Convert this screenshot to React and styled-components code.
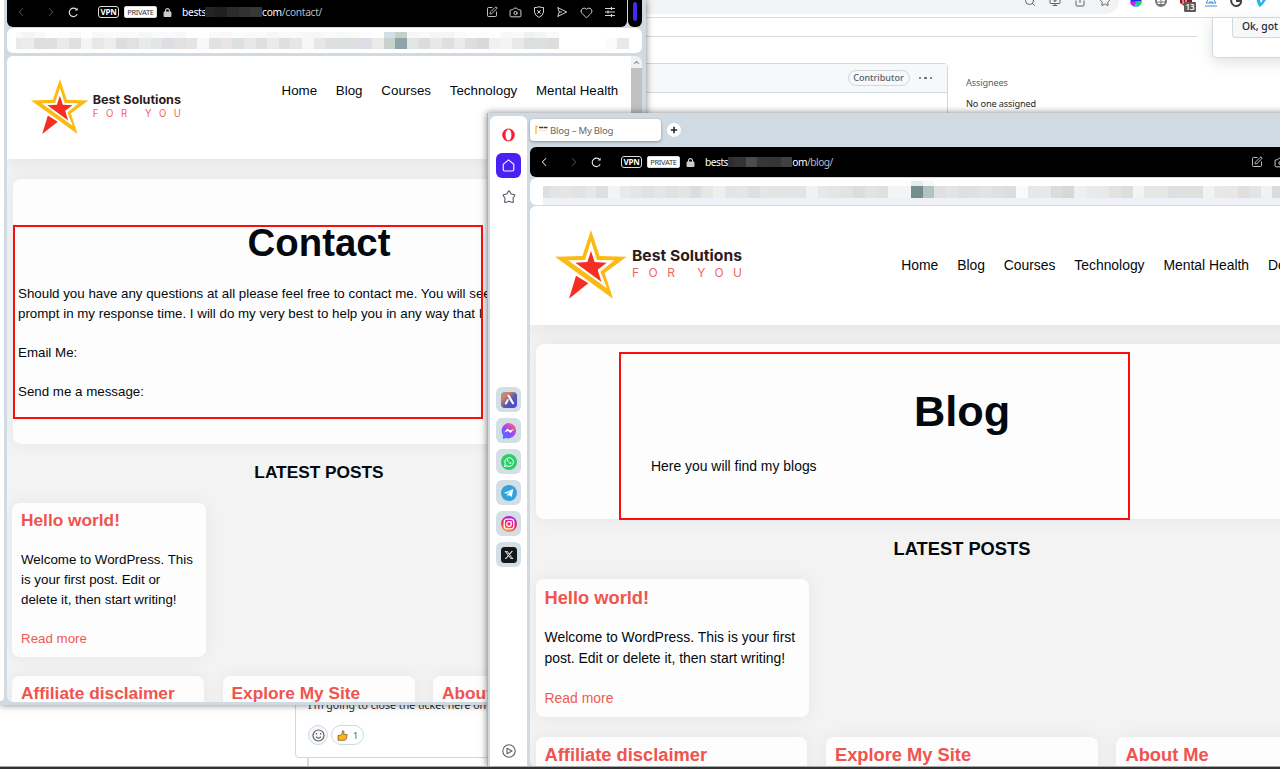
import React from "react";
import styled, { createGlobalStyle, css } from "styled-components";
import {
  Camera,
  ChevronLeft,
  ChevronRight,
  ChevronUp,
  Heart,
  MonitorDown,
  Search,
  Share,
  SquarePen,
  Star,
} from "lucide-react";
import { FaLock, FaXTwitter } from "react-icons/fa6";

const uiFont = `"Noto Sans", "Open Sans", sans-serif`;
const pageFont = `"Liberation Sans", Arial, sans-serif`;
const frame = "#cfdae3";

const GlobalStyle = createGlobalStyle`
  * { box-sizing: border-box; }
  body { margin: 0; overflow: hidden; }
  h1, h2, h3, p { margin: 0; }
`;

const Desktop = styled.div`
  position: relative;
  width: 1280px;
  height: 769px;
  overflow: hidden;
  background: #fff;
  font-family: ${uiFont};
`;

const Taskbar = styled.div`
  position: absolute;
  left: 0;
  right: 0;
  bottom: 0;
  height: 3px;
  background: #35312f;
  border-top: 1px solid #aaa;
`;

const RedFrame = styled.div`
  position: absolute;
  left: ${({ $x }) => $x}px;
  top: ${({ $y }) => $y}px;
  width: ${({ $w }) => $w}px;
  height: ${({ $h }) => $h}px;
  border: 2px solid #fc0d0d;
`;

/* issue tracker window */

const Tracker = styled.div`
  height: 769px;
  color: #57606a;
`;

const Toolbar = styled.div`
  display: flex;
  height: 18px;
  overflow: hidden;
  border-bottom: 1px solid #dadde0;
  color: #5f6368;
`;

const Omnibox = styled.div`
  display: flex;
  justify-content: flex-end;
  gap: 13px;
  width: 1119px;
  height: 14px;
  padding-right: 8px;
  background: #f1f3f4;
  border-radius: 0 0 14px 0;

  svg {
    margin-top: -5px;
  }
`;

const Extensions = styled.div`
  display: flex;
  gap: 13px;
  margin: -5px 0 0 11px;
`;

const ExtensionSlot = styled.div`
  position: relative;
  flex: none;
  width: 12px;
  height: 12px;

  svg {
    display: block;
  }
`;

const Badge = styled.span`
  position: absolute;
  left: 4px;
  top: 7px;
  width: 12px;
  height: 10px;
  border-radius: 1px;
  background: #5d5d5d;
  color: #fff;
  font-size: 8px;
  font-weight: 600;
  line-height: 10px;
  text-align: center;
`;

const TabRule = styled.div`
  width: 1197px;
  height: 19px;
  border-bottom: 1px solid #d5dbe1;
`;

const TrackerBody = styled.div`
  display: flex;
  align-items: flex-start;
  gap: 18px;
  padding: 26px 0 0 295px;
`;

const Thread = styled.div`
  flex: none;
  width: 653px;

  &::after {
    content: "";
    display: block;
    height: 20px;
    margin-left: 12px;
    border-left: 2px solid #d8dee4;
  }
`;

const Comment = styled.div`
  display: flex;
  flex-direction: column;
  height: 695px;
  border: 1px solid #d0d7de;
  border-radius: 4px;
`;

const CommentHeader = styled.div`
  display: flex;
  align-items: center;
  justify-content: flex-end;
  gap: 9px;
  height: 29px;
  padding-right: 15px;
  border-bottom: 1px solid #d0d7de;
  background: #f6f8fa;
`;

const Role = styled.span`
  height: 16px;
  width: 62px;
  border: 1px solid #d0d7de;
  border-radius: 9px;
  font-size: 9px;
  font-weight: 500;
  line-height: 14px;
  text-align: center;
`;

const Dots = styled.span`
  display: flex;
  gap: 3px;
  i {
    width: 2.5px;
    height: 2.5px;
    border-radius: 50%;
    background: #57606a;
  }
`;

const CommentText = styled.p`
  margin: auto 0 12px 12px;
  color: #24292f;
  font-size: 10.6px;
  line-height: 16px;
`;

const Reactions = styled.div`
  display: flex;
  gap: 3px;
  margin: 0 0 12px 12px;
`;

const Reaction = styled.span`
  display: flex;
  align-items: center;
  justify-content: center;
  gap: 5px;
  width: ${({ $wide }) => ($wide ? 33 : 20)}px;
  height: 20px;
  border: 1px solid #d0d7de;
  border-radius: 10px;
  background: ${({ $wide }) => ($wide ? "#fff" : "#f6f8fa")};
  font-size: 9px;
`;

const Assignees = styled.div`
  padding-top: 13px;
  font-size: 9.2px;
  letter-spacing: -0.15px;
  line-height: 14px;
  p + p {
    margin-top: 6.5px;
    color: #24292f;
  }
`;

const Popover = styled.div`
  position: absolute;
  left: 1212px;
  top: 18px;
  width: 100px;
  height: 40px;
  padding-left: 19px;
  border: solid #d0d7de;
  border-width: 0 0 1px 1px;
  border-radius: 0 0 0 5px;
  background: #fff;
  box-shadow: 0 4px 14px rgba(120, 130, 140, 0.25);
`;

const PopoverButton = styled.div`
  height: 20px;
  padding-left: 9px;
  border: solid #d0d7de;
  border-width: 0 0 1px 1px;
  border-radius: 0 0 0 4px;
  background: #f6f8fa;
  color: #24292f;
  font-size: 10.3px;
  font-weight: 500;
  line-height: 16px;
  white-space: nowrap;
`;

/* browser windows */

const Window = styled.div`
  position: absolute;
  display: flex;
  left: ${({ $x }) => $x}px;
  top: ${({ $y }) => $y}px;
  width: ${({ $w }) => $w}px;
  height: ${({ $h }) => $h}px;
  overflow: hidden;
  border-left: ${({ $edge }) => ($edge ? "1px solid #a9b0b6" : "none")};
  background: ${frame};
  box-shadow: 0 0 7px rgba(0, 0, 0, 0.5);
`;

const EdgeStrip = styled.div`
  flex: none;
  width: 4px;
  height: 701px;
  margin-right: 3px;
  background: #fff;
  border-radius: 0 0 5px 0;
`;

const Column = styled.div`
  display: flex;
  flex: none;
  flex-direction: column;
  width: ${({ $w }) => $w}px;
  height: ${({ $h }) => $h}px;
`;

const Row = styled.div`
  display: flex;
  flex: ${({ $fill }) => ($fill ? 1 : "none")};
  min-height: 0;
`;

const AddressBar = styled.div`
  display: flex;
  flex: none;
  align-items: center;
  width: ${({ $w }) => $w}px;
  height: ${({ $flat }) => ($flat ? 27 : 30)}px;
  padding: ${({ $flat }) => ($flat ? "0 0 3px 7px" : "0 0 0 7px")};
  border-radius: ${({ $flat }) => ($flat ? "0 0 6px 6px" : "6px 0 0 6px")};
  background: #000;
  color: #ddd;

  svg {
    flex: none;
  }
`;

const NavIcons = styled.div`
  display: flex;
  align-items: center;
  justify-content: space-between;
  width: 65px;
  margin-right: 19px;

  svg:nth-child(1) {
    color: ${({ $dim }) => ($dim ? "#4a4a4a" : "#ddd")};
  }
  svg:nth-child(2) {
    margin-left: 6px;
    color: #4a4a4a;
  }
`;

const Tag = styled.span`
  flex: none;
  width: ${({ $w }) => $w}px;
  height: 12px;
  margin-right: 5px;
  border: 1px solid #ddd;
  border-radius: ${({ $solid }) => ($solid ? 2 : 3)}px;
  background: ${({ $solid }) => ($solid ? "#fff" : "#000")};
  color: ${({ $solid }) => ($solid ? "#333" : "#fff")};
  font-size: ${({ $solid }) => ($solid ? 7.5 : 8)}px;
  font-weight: ${({ $solid }) => ($solid ? 400 : 700)};
  letter-spacing: -0.3px;
  line-height: 10px;
  text-align: center;
`;

const LockSlot = styled.span`
  display: flex;
  width: 20px;
  padding-left: 1px;
  color: #ccc;
`;

const Url = styled.div`
  display: flex;
  align-items: center;
  color: #fff;
  font-size: 10.2px;
  letter-spacing: ${({ $spacing }) => $spacing}px;
  line-height: 14px;
  span:first-child {
    width: 23px;
    overflow: hidden;
  }
  span:last-child {
    color: #b3bdc8;
  }
`;

const Actions = styled.div`
  display: flex;
  align-items: center;
  gap: 11.3px;
  margin: 0 ${({ $right }) => $right}px 0 auto;
  color: #d5d5d5;
`;

const SidePill = styled.div`
  width: 14px;
  height: 27px;
  margin-left: 1px;
  padding: 2px 5px;
  border-radius: 0 0 6px 6px;
  background: #000;
  &::before {
    content: "";
    display: block;
    height: 19px;
    border-radius: 2px;
    background: #4b25f5;
  }
`;

const Bookmarks = styled.div`
  flex: none;
  height: ${({ $h }) => $h}px;
  margin: 1px 0 ${({ $below }) => $below}px;
  padding: ${({ $pad }) => $pad};
  overflow: hidden;
  background: #fff;
  border-radius: 6px;
`;

const MosaicRow = styled.div`
  display: flex;
  height: ${({ $h }) => $h}px;
  background: ${({ $bg }) => $bg || "none"};
`;

const Cell = styled.i`
  flex: none;
  width: ${({ $w }) => $w || 11.66}px;
  background: ${({ $c }) => $c};
`;

/* site page inside a browser */

const Page = styled.div`
  flex: 1;
  min-height: 0;
  overflow: hidden;
  border-radius: 6px 0 0 6px;
  background: #f3f3f3;
  color: #03090e;
  font-family: ${pageFont};
  font-size: ${({ $size }) => $size}px;
  line-height: 1.5;
`;

const SiteHeader = styled.header`
  display: flex;
  align-items: ${({ $top }) => ($top ? "flex-start" : "center")};
  height: ${({ $h }) => $h}px;
  padding: ${({ $pad }) => $pad};
  background: #fff;
  box-shadow: 0 0 22px rgba(0, 0, 0, 0.09);
`;

const SiteNav = styled.nav`
  display: flex;
  gap: 18.8px;
  margin-left: ${({ $left }) => $left}px;
  padding-top: ${({ $drop }) => $drop || 0}px;
  font-size: ${({ $size }) => $size}px;
  white-space: nowrap;
`;

const panel = css`
  background: #fdfdfd;
  border-radius: 8px;
  box-shadow: 0 0 18px rgba(0, 0, 0, 0.06);
`;

const Hero = styled.section`
  ${panel}
  height: ${({ $h }) => $h}px;
  margin: ${({ $above }) => $above}px 5.5px 0;
  padding: ${({ $pad }) => $pad};
  white-space: nowrap;
`;

const HeroTitle = styled.h1`
  font-size: ${({ $size }) => $size}px;
  line-height: 1.2;
  text-align: center;
`;

const HeroText = styled.p`
  margin-top: ${({ $gap }) => $gap}px;
`;

const SectionTitle = styled.h2`
  margin: ${({ $m }) => $m};
  font-size: ${({ $size }) => $size}px;
  line-height: 24px;
  text-align: center;
`;

const Cards = styled.div`
  display: flex;
  gap: ${({ $between }) => $between}px;
  margin: 0 5px ${({ $gap }) => $gap}px ${({ $left }) => $left}px;
`;

const Card = styled.article`
  ${panel}
  flex: none;
  width: ${({ $w }) => $w}px;
  height: ${({ $h }) => $h}px;
  padding: ${({ $top }) => $top}px 9px;
  white-space: nowrap;

  h3 {
    color: #f0544e;
    font-size: ${({ $title }) => $title}px;
    line-height: 26px;
  }
  p {
    margin: ${({ $textGap }) => $textGap};
  }
  a {
    color: #f05a54;
  }
`;

const Scrollbar = styled.div`
  width: 11px;
  background: #c1c1c1;
  border-radius: 0 6px 0 0;
  overflow: hidden;
`;

const ScrollButton = styled.div`
  display: flex;
  justify-content: center;
  align-items: center;
  height: 12px;
  background: #f1f1f1;
  color: #999;
`;

/* side panel and tabs */

const Sidebar = styled.aside`
  display: flex;
  flex: none;
  flex-direction: column;
  align-items: center;
  width: 37px;
  height: 651px;
  margin: 3px 3px 0 2px;
  padding: 12px 0 9px;
  background: #fff;
  border-radius: 6px 6px 0 0;
`;

const SideButton = styled.div`
  display: flex;
  flex: none;
  align-items: center;
  justify-content: center;
  width: 25px;
  height: 25px;
  border-radius: 6px;
  background: #d3dee5;
`;

const HomeButton = styled(SideButton)`
  margin: 11px 0 12px;
  background: #4b20f5;
`;

const SideApps = styled.div`
  display: flex;
  flex-direction: column;
  gap: 6px;
  margin: 183px 0 auto;
`;

const TabStrip = styled.div`
  display: flex;
  flex: none;
  align-items: center;
  gap: 6px;
  height: 34px;
`;

const Tab = styled.div`
  display: flex;
  align-items: center;
  gap: 2px;
  width: 131px;
  height: 22px;
  padding-left: 5px;
  border-radius: 4px;
  background: #fff;
  box-shadow: 0 1px 3px rgba(0, 0, 0, 0.35);
  color: #666;
  font-size: 9.6px;
  letter-spacing: -0.25px;
`;

const NewTab = styled.div`
  display: flex;
  align-items: center;
  justify-content: center;
  width: 14px;
  height: 14px;
  border-radius: 50%;
  background: #fff;
`;

const LogoSvg = styled.svg`
  flex: none;
  overflow: visible;
  font-family: Inter, sans-serif;
`;

function Logo({ width }) {
  return (
    <LogoSvg width={width} height={(width * 69) / 187} viewBox="0 0 187 69">
      <g transform="scale(.3333)">
        <path
          fill="#fcbb14"
          fillRule="evenodd"
          d="M108 0 134 78 215 80 149 129 174 206 0 80 82 78zM108 34 90 90 39 91 156 175 136 125 178 91 126 90z"
        />
        <path fill="#f42e23" d="M108 63 119 96 155 98 128 119 139 155 61 98 97 96z" />
        <path fill="#f42e23" d="M63 137 100 160 42 206z" />
      </g>
      <text x="77" y="31" textLength="110" lengthAdjust="spacingAndGlyphs" fontSize="15" fontWeight="700" fill="#2d1b20">
        Best Solutions
      </text>
      <text x="77" y="47" textLength="110" fontSize="12" fontWeight="400" fill="#f0655f">
        FOR YOU
      </text>
    </LogoSvg>
  );
}

function Reload() {
  return (
    <svg width="11" height="11" viewBox="0 0 11 11" fill="none" stroke="#ddd" strokeWidth="1.2">
      <path d="M9.2 7.3A4.2 4.2 0 1 1 8.9 3" />
      <path d="M6.8 3.6H9.6V.8z" fill="#ddd" stroke="none" />
    </svg>
  );
}

function ShieldX() {
  return (
    <svg width="12" height="12" viewBox="0 0 12 12" fill="none" stroke="currentColor">
      <path d="M1.5 1.5Q4 1.8 6 .7 8 1.8 10.5 1.5V6Q10.2 9.5 6 11.4 1.8 9.5 1.5 6zM4.3 4.3l3.4 3.4M7.7 4.3 4.3 7.7" />
    </svg>
  );
}

function Flow() {
  return (
    <svg width="12" height="12" viewBox="0 0 12 12" fill="none" stroke="currentColor" strokeLinejoin="round">
      <path d="M1.7 1.5 10.7 6 1.7 10.5 3.3 6zM3.3 6H6" />
    </svg>
  );
}

function Sliders() {
  return (
    <svg width="12" height="12" viewBox="0 0 12 12" fill="none" stroke="currentColor" strokeWidth="1.2">
      <path d="M1 2.5H11M1 6H11M1 9.5H11M7.5 1V4M4 4.5V7.5M7.5 8V11" />
    </svg>
  );
}

function Mosaic({ colors, height, first }) {
  return (
    <MosaicRow $h={height}>
      {colors.split(" ").map((c, i) => (
        <Cell key={i} $c={`#${c}`} $w={i === 0 ? first : undefined} />
      ))}
    </MosaicRow>
  );
}

function Address({ domainEnd, path, width, flat, blocks }) {
  return (
    <AddressBar $w={width} $flat={flat}>
      <NavIcons $dim={flat}>
        <ChevronLeft size={14} strokeWidth={1.8} />
        <ChevronRight size={14} strokeWidth={1.8} />
        <Reload />
      </NavIcons>
      <Tag $w={21}>VPN</Tag>
      <Tag $w={33} $solid>
        PRIVATE
      </Tag>
      <LockSlot>
        <FaLock size={9} />
      </LockSlot>
      <Url $spacing={flat ? -0.28 : -0.5}>
        <span>bests</span>
        <Mosaic colors={blocks} height={10} first={flat ? 10.4 : 6} />
        <span>{domainEnd}</span>
        <span>{path}</span>
      </Url>
      <Actions $right={flat ? 11 : 8}>
        <SquarePen size={12} strokeWidth={1.8} />
        <Camera size={13} strokeWidth={1.8} />
        {flat && (
          <>
            <ShieldX />
            <Flow />
            <Heart size={13} strokeWidth={1.8} />
            <Sliders />
          </>
        )}
      </Actions>
    </AddressBar>
  );
}

function TrackerWindow() {
  return (
    <Tracker>
      <Toolbar>
        <Omnibox>
          <Search size={12} />
          <MonitorDown size={12} />
          <Share size={12} />
          <Star size={12} />
        </Omnibox>
        <Extensions>
          <ExtensionSlot>
            <svg width="12" height="12">
              <circle cx="6" cy="6" r="5.5" fill="#2632e5" />
              <path d="M6 6 0 7A6 6 0 0 0 4 11.5z" fill="#c724e8" />
              <path d="M6 6 4 11.5A6 6 0 0 0 9 11z" fill="#20c8e8" />
              <path d="M6 6 9 11A6 6 0 0 0 12 6z" fill="#20d950" />
            </svg>
          </ExtensionSlot>
          <ExtensionSlot>
            <svg width="13" height="12" stroke="#777" fill="none">
              <circle cx="6" cy="6" r="5" strokeWidth="2" />
              <path d="M1 7H12M3 9.5H10M6 3V11" />
            </svg>
          </ExtensionSlot>
          <ExtensionSlot>
            <svg width="12" height="12">
              <path d="M0 0H12V8L6 12 0 8z" fill="#a30d18" />
              <path d="M3 5v4M6 5v4" stroke="#fff" />
            </svg>
            <Badge>13</Badge>
          </ExtensionSlot>
          <ExtensionSlot>
            <svg width="12" height="12" fill="none" stroke="#3a91d8">
              <path d="M6 0 1 8H11zM0 11H12M4 7H8" />
            </svg>
          </ExtensionSlot>
          <ExtensionSlot>
            <svg width="12" height="12" fill="none" stroke="#444" strokeWidth="2">
              <path d="M10.8 4A5 5 0 1 1 6 1M6 6H11" />
            </svg>
          </ExtensionSlot>
          <ExtensionSlot>
            <svg width="12" height="12">
              <path d="M1 3H4L6 8 9 3H12Q9 9 5 12 3 11 1 3z" fill="#1ab7ea" />
            </svg>
          </ExtensionSlot>
        </Extensions>
      </Toolbar>
      <TabRule />
      <TrackerBody>
        <Thread>
          <Comment>
            <CommentHeader>
              <Role>Contributor</Role>
              <Dots>
                <i />
                <i />
                <i />
              </Dots>
            </CommentHeader>
            <CommentText>I'm going to close the ticket here on G</CommentText>
            <Reactions>
              <Reaction>
                <svg width="13" height="13" fill="none" stroke="#57606a" strokeWidth="1.2">
                  <circle cx="6.5" cy="6.5" r="5.5" />
                  <path d="M4 7.7Q6.5 10.5 9 7.7M4.4 4v1.6M8.6 4v1.6" />
                </svg>
              </Reaction>
              <Reaction $wide>
                <svg width="11" height="11" viewBox="0 0 11 11">
                  <path
                    d="M1 5.5H3.2L5.2 3 5.6.8Q7.3.5 7 2.8L6.7 4.5H10Q10.7 5.3 9.9 6.2 10.3 7 9.6 7.7 9.8 8.5 9 9 8.8 10.3 7.5 10.3H1z"
                    fill="#fbb41b"
                    stroke="#6f5117"
                    strokeWidth=".7"
                  />
                </svg>
                1
              </Reaction>
            </Reactions>
          </Comment>
        </Thread>
        <Assignees>
          <p>Assignees</p>
          <p>No one assigned</p>
        </Assignees>
      </TrackerBody>
      <Popover>
        <PopoverButton>Ok, got it!</PopoverButton>
      </Popover>
    </Tracker>
  );
}

function ContactWindow() {
  const card = { $w: 192, $h: 154, $title: 17.3, $top: 4, $textGap: "17px 0 19px" };
  return (
    <Window $x={0} $y={0} $w={646} $h={705}>
      <EdgeStrip />
      <Column $w={635} $h={702}>
        <Row>
          <Address flat width={620} domainEnd="com" path="/contact/" blocks="242424 202020 2b2b2b 323232 383838" />
          <SidePill />
        </Row>
        <Bookmarks $h={25} $below={3} $pad="4px 0 0 8.7px">
          <Mosaic
            height={6}
            first={6.7}
            colors="fafafa f5f5f5 f8faf9 ffffff fdfdfd fafafa ffffff f8f8f8 fafafa f8fafa fafafa f5f6f6 fafafa fafafa f8f8f8 ffffff ffffff fafafa f9f9f9 fcfcfc fafafa fafafa f6f6f6 fafafa fafafa f5f8f7 f5f8f7 fafafa f8fafa fafafa fdfdfd ffffff d2dfe7 c6d0c8 f7f7f7 fafafa f5f5f5 f5f5f5 f9fbfa fdfdfd fdfdfd ffffff f8f8f8 fafafa f0f2f2 f5f5f5 fafafa"
          />
          <Mosaic
            height={11}
            first={6.7}
            colors="e9eaea ebecec dededf dfdfdf e8eaec e1e0df f3f6f6 e8e7e6 ededeb dcdde0 e1e0e2 e8ebeb e4e5e7 dddee1 e3e2e1 e5e4e2 f6f8fc e2e2e2 e8e5e4 dddfe1 e7e8e9 dfdfdf eaebe9 dfdfe1 e6e6e6 f6f7f6 e7e7e8 dedfe0 dedfe0 dedfe0 dcdde5 eaebe8 c8d1ce 8fa5a8 e1e5e3 dadddc e8e8e9 dfdfdf ebebed dedddf d9d9da eff0f4 f4f4f3 e9e9e9 dcdfdf dedfe0 dddeda ffffff ffffff ffffff ffffff fbfbfb e9e9e9"
          />
        </Bookmarks>
        <Row $fill>
          <Page $size={13.33}>
            <SiteHeader $top $h={103} $pad="23px 0 0 24px">
              <Logo width={150} />
              <SiteNav $left={100.5} $drop={1.5} $size={13.33}>
                <span>Home</span>
                <span>Blog</span>
                <span>Courses</span>
                <span>Technology</span>
                <span>Mental Health</span>
              </SiteNav>
            </SiteHeader>
            <Hero $above={20} $h={265} $pad="41px 5.5px">
              <HeroTitle $size={38.4}>Contact</HeroTitle>
              <HeroText $gap={18}>
                Should you have any questions at all please feel free to contact me. You will see
                <br />
                prompt in my response time. I will do my very best to help you in any way that I
              </HeroText>
              <HeroText $gap={19}>Email Me:</HeroText>
              <HeroText $gap={19}>Send me a message:</HeroText>
            </Hero>
            <SectionTitle $size={17.3} $m="16px 0 19px">
              LATEST POSTS
            </SectionTitle>
            <Cards $between={18.5} $gap={19} $left={5}>
              <Card {...card} $w={194}>
                <h3>Hello world!</h3>
                <p>
                  Welcome to WordPress. This
                  <br />
                  is your first post. Edit or
                  <br />
                  delete it, then start writing!
                </p>
                <a>Read more</a>
              </Card>
            </Cards>
            <Cards $between={18.5} $gap={0} $left={5}>
              <Card {...card}>
                <h3>Affiliate disclaimer</h3>
              </Card>
              <Card {...card}>
                <h3>Explore My Site</h3>
              </Card>
              <Card {...card}>
                <h3>About</h3>
              </Card>
            </Cards>
          </Page>
          <Scrollbar>
            <ScrollButton>
              <ChevronUp size={9} strokeWidth={3} />
            </ScrollButton>
          </Scrollbar>
        </Row>
      </Column>
    </Window>
  );
}

function SideApp({ name }) {
  const art = {
    aria: (
      <>
        <rect width="16" height="16" rx="4" fill="url(#aria)" />
        <path d="M7.6 3.8 12 11.2" stroke="#fff" strokeWidth="2.2" strokeLinecap="round" />
        <path d="M6.8 8 4.8 11.4" stroke="#fff" strokeWidth="2" strokeLinecap="round" />
      </>
    ),
    messenger: (
      <>
        <path d="M8 0a7.7 7.7 0 1 1-3 15L2 16V12A7.7 7.7 0 0 1 8 0z" fill="url(#messenger)" />
        <path d="m3 9.5 3.5-4 2.5 2 4-1.5-3.5 4-2.5-2z" fill="#fff" />
      </>
    ),
    whatsapp: (
      <>
        <circle cx="8" cy="8" r="8" fill="#2ace67" />
        <path d="m3.5 12.6.8-2.6a4.3 4.3 0 1 1 1.7 1.8z" fill="none" stroke="#fff" />
        <path d="M6 5.5q-.5 2.5 3.8 4.4l.8-1-1.3-.7-.8.6Q7.5 8.2 7 7l.5-.6-.6-1.1z" fill="#fff" />
      </>
    ),
    telegram: (
      <>
        <circle cx="8" cy="8" r="8" fill="#30a3dc" />
        <path d="m3 7.8 9.3-3.7-1.5 8-3-2-1.2 1.3-.4-2.2 3.7-3.4-4.7 2.9z" fill="#fff" />
      </>
    ),
    instagram: (
      <>
        <circle cx="8" cy="8" r="8" fill="url(#instagram)" />
        <rect x="3.2" y="3.2" width="9.6" height="9.6" rx="2.8" fill="none" stroke="#fff" strokeWidth="1.3" />
        <circle cx="8" cy="8" r="2.3" fill="none" stroke="#fff" strokeWidth="1.3" />
        <circle cx="10.7" cy="5.3" r=".6" fill="#fff" />
      </>
    ),
  };
  return (
    <SideButton>
      {name === "x" ? (
        <svg width="16" height="16">
          <rect width="16" height="16" rx="3.5" fill="#15181b" />
          <FaXTwitter x="3" y="3" size={10} color="#eee" />
        </svg>
      ) : (
        <svg width="16" height="16" viewBox="0 0 16 16">
          <defs>
            <linearGradient id="aria" x1="0" y1="0" x2="1" y2="1">
              <stop stopColor="#6ba1cc" />
              <stop offset=".25" stopColor="#dc8062" />
              <stop offset=".55" stopColor="#585bac" />
              <stop offset="1" stopColor="#4a42e8" />
            </linearGradient>
            <linearGradient id="messenger" x1=".1" y1="1" x2=".8" y2="0">
              <stop stopColor="#2089ff" />
              <stop offset=".5" stopColor="#a142ff" />
              <stop offset="1" stopColor="#ff6470" />
            </linearGradient>
            <linearGradient id="instagram" x1=".2" y1="1" x2=".6" y2="0">
              <stop stopColor="#ffc22e" />
              <stop offset=".45" stopColor="#ff2350" />
              <stop offset="1" stopColor="#a320e8" />
            </linearGradient>
          </defs>
          {art[name]}
        </svg>
      )}
    </SideButton>
  );
}

function BlogWindow() {
  const card = { $w: 271.8, $h: 138, $title: 18.3, $top: 6, $textGap: "16px 0 19px" };
  return (
    <Window $edge $x={487} $y={113} $w={1000} $h={654}>
      <Sidebar>
        <svg width="13" height="14" viewBox="0 0 13 14">
          <path
            d="M6.5.5A6.3 6.5 0 1 0 6.5 13.5 6.3 6.5 0 1 0 6.5.5M6.5 1.5C10.4 1.5 10.4 12.5 6.5 12.5 2.6 12.5 2.6 1.5 6.5 1.5"
            fill="#ff1b2d"
            fillRule="evenodd"
          />
        </svg>
        <HomeButton>
          <svg width="13" height="13" fill="none" stroke="#fff" strokeWidth="1.1">
            <path d="M1.2 5.3 6.5.9 11.8 5.3V10.5Q11.8 12 10.3 12H2.7Q1.2 12 1.2 10.5zM4.5 12H8.5" />
          </svg>
        </HomeButton>
        <svg width="14" height="14" viewBox="0 0 14 14" fill="none" stroke="#4f5b68" strokeWidth="1.1" strokeLinejoin="round">
          <path d="M7 .9Q7.6.9 9.2 4L12.6 4.7Q13.4 5.2 11 8L11.4 12Q11 13 7 11.3 3 13 2.6 12L3 8Q.6 5.2 1.4 4.7L4.8 4Q6.4.9 7 .9z" />
        </svg>
        <SideApps>
          <SideApp name="aria" />
          <SideApp name="messenger" />
          <SideApp name="whatsapp" />
          <SideApp name="telegram" />
          <SideApp name="instagram" />
          <SideApp name="x" />
        </SideApps>
        <svg width="14" height="14" fill="none" stroke="#56606b" strokeWidth="1.1">
          <circle cx="7" cy="7" r="6.2" />
          <path d="M5 4.3 10 7 5 9.7z" strokeLinejoin="round" />
        </svg>
      </Sidebar>
      <Column $w={864} $h={654}>
        <TabStrip>
          <Tab>
            <svg width="13" height="10">
              <path d="M3 1.5H1V9" stroke="#f5bd20" strokeWidth="1.3" fill="none" />
              <path d="M4 2.5H13" stroke="#4a3c3c" strokeWidth="1.4" strokeDasharray="4 .5" />
              <path d="M4.5 5.5H12" stroke="#efb3b0" strokeDasharray="1 1" />
            </svg>
            Blog – My Blog
          </Tab>
          <NewTab>
            <svg width="8" height="8" stroke="#1d2a35" strokeWidth="1.6">
              <path d="M4 .8V7.2M.8 4H7.2" />
            </svg>
          </NewTab>
        </TabStrip>
        <Address width={765} domainEnd="om" path="/blog/" blocks="2e2e2e 343434 4c4c4c 373737 363636 404040" />
        <Bookmarks $h={27} $below={1} $pad="3px 0 0 13.3px">
          <Mosaic
            height={5}
            first={6.5}
            colors="fff fff fff fff fff fff fff fff fff fff fff fff fff fff fff fff fff fff fff fff fff fff fff fff fff fff fff fff fff fff fff fff e6ebef f5f8f9"
          />
          <Mosaic
            height={12}
            first={6.5}
            colors="dedede e3e4e4 e6e5e4 e2e2e2 e7e7e7 dedfdf f4f4f4 e8e9e9 e4e5e4 e1e1e1 e5e4e6 e2e1e0 e4e4e5 dbdde1 e7e8e4 edf0f0 e3e5e4 e5e5e7 dedfe2 e7e4e2 e5e4e5 e3e4e5 e3e4e5 f0f1f3 e8e7e7 e5e5e6 e2e4e2 dcdddd e2e4e3 e1e0de f3f4f4 f3f4f4 738f8b b5c2c4 dfe1e0 e4e4e4 dfdfe0 e1e1e5 e3e3e4 e0e0df dddce0 fafafa e6e8e7 e8e8e8 dadddb d9d7d6 edf0f0 e9ebea e9e9ea e4e2df dededd f3f3f4 e6e7e5 e6e6e4 dde0de dfe0df e0e0dd f1f2f1 e9e7e7 e7e7e5 e1dedc e4e4e7 f1f1f2 dbdbdb"
          />
          <MosaicRow $h={7} $bg="#eef2f6" />
        </Bookmarks>
        <Page $size={13.93}>
          <SiteHeader $h={119} $pad="0 0 3px 25px">
            <Logo width={187} />
            <SiteNav $left={159.3} $drop={2} $size={13.9}>
              <span>Home</span>
              <span>Blog</span>
              <span>Courses</span>
              <span>Technology</span>
              <span>Mental Health</span>
              <span>De</span>
            </SiteNav>
          </SiteHeader>
          <Hero $above={19} $h={175} $pad="42px 115.5px">
            <HeroTitle $size={43.3}>Blog</HeroTitle>
            <HeroText $gap={18}>Here you will find my blogs</HeroText>
          </Hero>
          <SectionTitle $size={18.3} $m="18px 0">
            LATEST POSTS
          </SectionTitle>
          <Cards $between={19} $gap={20} $left={5.5}>
            <Card {...card} $w={273.5}>
              <h3>Hello world!</h3>
              <p>
                Welcome to WordPress. This is your first
                <br />
                post. Edit or delete it, then start writing!
              </p>
              <a>Read more</a>
            </Card>
          </Cards>
          <Cards $between={18.7} $gap={0} $left={5.5}>
            <Card {...card} $top={5}>
              <h3>Affiliate disclaimer</h3>
            </Card>
            <Card {...card} $top={5}>
              <h3>Explore My Site</h3>
            </Card>
            <Card {...card} $top={5}>
              <h3>About Me</h3>
            </Card>
          </Cards>
        </Page>
      </Column>
    </Window>
  );
}

export default function App() {
  return (
    <>
      <GlobalStyle />
      <Desktop>
        <TrackerWindow />
        <ContactWindow />
        <RedFrame $x={13} $y={225} $w={470} $h={194} />
        <BlogWindow />
        <RedFrame $x={619} $y={352} $w={511} $h={168} />
        <Taskbar />
      </Desktop>
    </>
  );
}
